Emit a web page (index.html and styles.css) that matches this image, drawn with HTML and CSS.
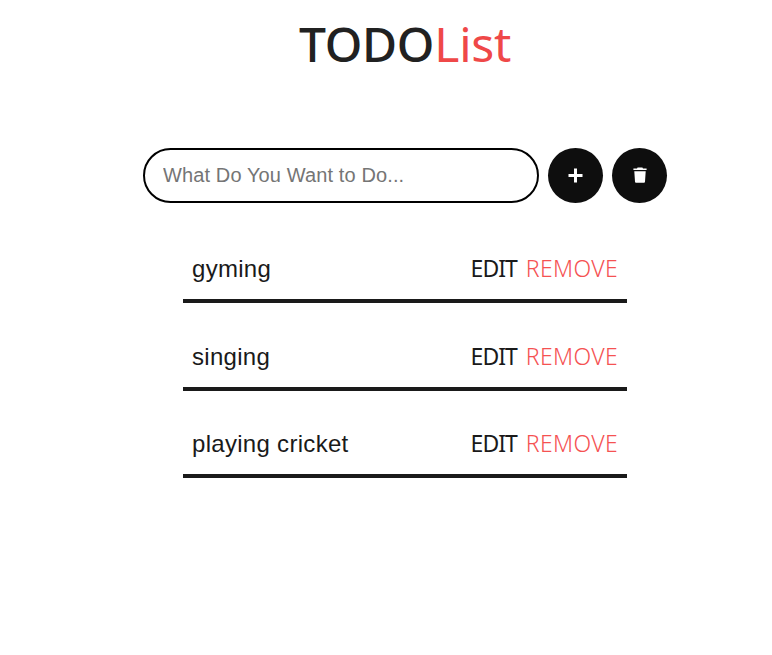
FILE: index.html
```html
<!DOCTYPE html>
<html lang="en">
<head>
    <meta charset="UTF-8">
    <meta name="viewport" content="width=device-width, initial-scale=1.0">
    <title>TODO List</title>
    <link rel="stylesheet" href="styles.css">
</head>
<body>
    <div class="app">
        <h1 class="title">TODO<span class="title-accent">List</span></h1>

        <form class="add-form">
            <input class="add-input" type="text" placeholder="What Do You Want to Do...">
            <button class="round-btn" type="button" aria-label="Add">
                <svg class="plus-icon" width="15" height="15" viewBox="0 0 15 15"><path d="M6 0.5h3v5.5h5.5v3H9v5.5H6V9H0.5V6H6z" fill="#fff"/></svg>
            </button>
            <button class="round-btn" type="button" aria-label="Clear all">
                <svg class="trash-icon" width="14" height="16" viewBox="0 0 14 16"><path d="M4.6 0.4h4.8l0.6 1.2h3.6v1.5H0.4V1.6H4zM1.3 4.2h11.4l-0.7 10.6a1 1 0 0 1-1 0.9H3a1 1 0 0 1-1-0.9z" fill="#fff"/></svg>
            </button>
        </form>

        <ul class="todo-list">
            <li class="todo">
                <span class="todo-text">gyming</span>
                <a class="todo-edit">EDIT</a>
                <a class="todo-remove">REMOVE</a>
            </li>
            <li class="todo">
                <span class="todo-text">singing</span>
                <a class="todo-edit">EDIT</a>
                <a class="todo-remove">REMOVE</a>
            </li>
            <li class="todo">
                <span class="todo-text">playing cricket</span>
                <a class="todo-edit">EDIT</a>
                <a class="todo-remove">REMOVE</a>
            </li>
        </ul>
    </div>
</body>
</html>
```

FILE: styles.css
```css
body {
    background-color: #FFFFFF;
    color: #1A1A1A;
    font-family: "Liberation Sans", Arial, sans-serif;
    margin: 0;
    padding-left: 38px;
}
.app {
    display: flex;
    flex-direction: column;
    align-items: center;
}
.title {
    color: #212121;
    font-family: "Noto Sans", sans-serif;
    font-size: 48px;
    font-weight: 500;
    letter-spacing: -0.25px;
    line-height: 68px;
    margin: 10px 0 70px;
}
.title-accent {
    color: #EF4848;
    font-weight: 400;
}
.add-form {
    display: flex;
    gap: 9px;
    margin-bottom: 34px;
}
.add-input {
    width: 396px;
    height: 55px;
    box-sizing: border-box;
    border: 2px solid #000000;
    border-radius: 28px;
    padding: 0 18px;
    font-family: "Liberation Sans", Arial, sans-serif;
    font-size: 20px;
    letter-spacing: 0.12px;
    outline: none;
}
.add-input::placeholder {
    color: #757575;
}
.round-btn {
    width: 55px;
    height: 55px;
    border: none;
    border-radius: 50%;
    background-color: #0E0E0E;
    display: flex;
    align-items: center;
    justify-content: center;
    padding: 0;
}
.plus-icon {
    margin-bottom: 1px;
}
.trash-icon {
    margin-bottom: 2px;
}
.todo-list {
    list-style: none;
    margin: 0;
    padding: 0;
    width: 444px;
}
.todo {
    display: flex;
    align-items: center;
    gap: 9px;
    height: 66px;
    box-sizing: border-box;
    padding: 0 9px;
    margin-bottom: 21.5px;
    border-bottom: 4px solid #1A1A1A;
}
.todo-text {
    flex: 1;
    font-size: 24px;
    letter-spacing: 0.3px;
    padding-top: 2px;
}
.todo-edit,
.todo-remove {
    font-family: "Noto Sans", sans-serif;
    font-size: 23px;
}
.todo-edit {
    letter-spacing: -1px;
}
.todo-remove {
    color: #F55252;
    font-weight: 300;
    letter-spacing: 0.35px;
}
```
